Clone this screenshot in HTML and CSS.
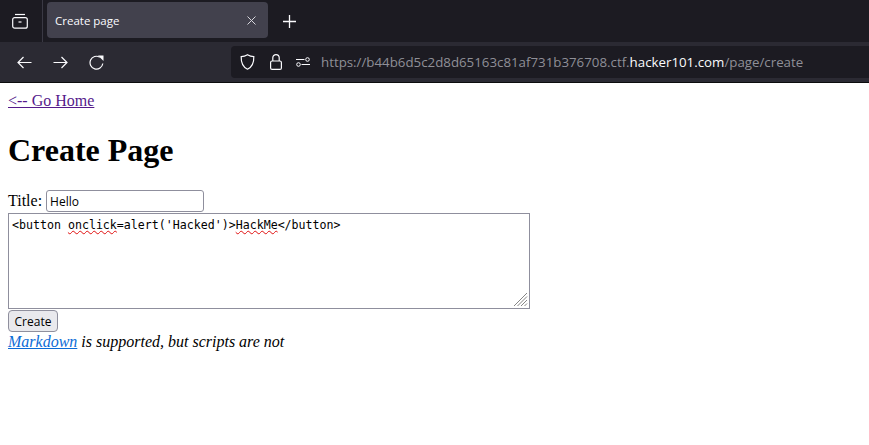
FILE: index.html
```html
<!DOCTYPE html>
<html lang="en">
<head>
<meta charset="utf-8">
<title>Create page</title>
<link rel="stylesheet" href="styles.css">
</head>
<body>
<header class="chrome">
  <div class="tabbar">
    <div class="tabs-btn">
      <svg width="16" height="16" viewBox="0 0 16 16" fill="none" stroke="#fbfbfe" stroke-width="1.2"><path d="M3 1.500h10"/><rect x="0.700" y="4.600" width="14.600" height="10.600" rx="2"/><path d="M6.500 9h3"/></svg>
    </div>
    <div class="tab">
      <span class="tab-title">Create page</span>
      <svg class="tab-close" width="9" height="9" viewBox="0 0 9 9" stroke="#d6d6dc" stroke-width="1"><path d="M.5.500l8 8M8.500.500l-8 8"/></svg>
    </div>
    <svg class="new-tab" width="13" height="13" viewBox="0 0 13 13" stroke="#fbfbfe" stroke-width="1.300"><path d="M6.500 0v13M0 6.500h13"/></svg>
  </div>
  <div class="toolbar">
    <div class="nav">
      <svg width="15" height="13" viewBox="0 0 15 13" fill="none" stroke="#fbfbfe" stroke-width="1.200"><path d="M14.500 6.500H1M6.500 1L1 6.500 6.500 12"/></svg>
      <svg width="15" height="13" viewBox="0 0 15 13" fill="none" stroke="#fbfbfe" stroke-width="1.200"><path d="M.5 6.500H14M8.500 1L14 6.500 8.500 12"/></svg>
      <svg width="15" height="15" viewBox="0 0 15 15" fill="none" stroke="#fbfbfe" stroke-width="1.200"><path d="M13.800 8.500A6.400 6.400 0 1 1 10.800 2.200"/><path d="M9 .5h5.500V6z" fill="#fbfbfe" stroke="none"/></svg>
    </div>
    <div class="urlbar">
      <svg width="15" height="16" viewBox="0 0 15 16" fill="none" stroke="#fbfbfe" stroke-width="1.200"><path d="M7.500 .8c2 1.200 4 1.800 6.300 1.900.2 6-1.800 10.300-6.300 12.500C3 13 1 8.700 1.200 2.700 3.500 2.600 5.500 2 7.500 .8z"/></svg>
      <svg width="12" height="16" viewBox="0 0 12 16" fill="none" stroke="#fbfbfe" stroke-width="1.200"><rect x=".6" y="7" width="10.800" height="8.400" rx="1.500"/><path d="M2.800 7V3.800a3.200 3.200 0 0 1 6.400 0V7"/></svg>
      <svg class="perm" width="14" height="10" viewBox="0 0 14 10" fill="none" stroke="#fbfbfe" stroke-width="1"><path d="M0 2.500h8.500M5.500 7.500H14"/><circle cx="11.500" cy="2.500" r="1.800"/><circle cx="2.500" cy="7.500" r="1.800"/></svg>
      <span class="url">https://b44b6d5c2d8d65163c81af731b376708.ctf.<span class="domain">hacker101.com</span>/page/create</span>
    </div>
  </div>
</header>
<main class="page">
  <a class="home" href="#">&lt;-- Go Home</a>
  <h1 class="heading">Create Page</h1>
  <form class="form">
    <div class="title-row">Title: <input class="title-input" type="text" value="Hello"></div>
    <div class="editor"><span>&lt;button </span><span class="typo">onclick</span><span>=alert('Hacked')&gt;</span><span class="typo">HackMe</span><span>&lt;/button&gt;</span>
      <svg class="grip" width="15" height="15" viewBox="0 0 15 15" stroke="#858585" stroke-width="1"><path d="M1 14L14 1M4.500 14L14 4.500M8 14l6-6M11.500 14l2.500-2.500"/></svg>
    </div>
    <button class="create" type="button">Create</button>
  </form>
  <p class="note"><a class="md" href="#">Markdown</a> is supported, but scripts are not</p>
</main>
</body>
</html>
```
FILE: styles.css
```css
html, body { margin: 0; padding: 0; background: #fff; }
body { font-family: "Liberation Serif", serif; font-size: 16px; color: #000; height: 445px; overflow: hidden; }

.chrome { font-family: "Open Sans", "Noto Sans", sans-serif; border-bottom: 1px solid #0c0c0d; }
.tabbar { height: 42px; box-sizing: border-box; background: #1c1b22; display: flex; align-items: center; }
.tabs-btn { width: 43px; height: 42px; box-sizing: border-box; border-right: 1px solid #3a3944; display: flex; align-items: center; justify-content: center; margin-right: 4px; padding-right: 3px; }
.tab { width: 221px; height: 36px; margin-top: -2px; background: #42414d; border-radius: 4px; display: flex; align-items: center; justify-content: space-between; padding: 0 12px 0 8px; box-sizing: border-box; }
.tab-title { color: #fbfbfe; font-size: 11.5px; }
.new-tab { margin-left: 15px; }

.toolbar { height: 40px; background: #2b2a33; display: flex; align-items: center; }
.nav { width: 231px; box-sizing: border-box; padding-left: 17px; display: flex; align-items: center; gap: 21px; }
.urlbar { flex: 1; height: 32px; background: #1c1b22; border-radius: 4px 0 0 4px; display: flex; align-items: center; padding-left: 9px; gap: 15px; overflow: hidden; }
.perm { margin-left: -1px; }
.url { color: #8f8f97; font-size: 13.3px; white-space: nowrap; margin-left: -4px; }
.domain { color: #fbfbfe; }

.page { padding: 9px 8px 0; }
.home { display: block; line-height: 18px; color: #551a8b; }
.heading { font-size: 32px; line-height: 37px; margin: 22px 0 21px; }
.title-row { line-height: 22px; height: 22px; display: flex; align-items: center; gap: 4px; }
.title-input { width: 158px; height: 22px; box-sizing: border-box; border: 1px solid #8f8f9d; border-radius: 3px; padding: 1px 3px; font: 12px "Open Sans", sans-serif; color: #000; margin: 0; }
.editor { position: relative; width: 522px; height: 96px; box-sizing: border-box; border: 1px solid #8f8f9d; margin-top: 1px; padding: 3px; font: 11.62px/16px "DejaVu Sans Mono", monospace; white-space: pre; }
.typo { text-decoration: underline wavy #e01010; text-decoration-thickness: 1.3px; }
.grip { position: absolute; right: 1px; bottom: 1px; }
.create { display: block; width: 50px; height: 22px; margin-top: 1px; padding: 0; background: #e9e9ed; border: 1px solid #8f8f9d; border-radius: 4px; font: 12px "Open Sans", sans-serif; color: #000; }
.note { margin: 0; line-height: 19px; font-style: italic; }
.md { color: #0b6bd6; }
```
